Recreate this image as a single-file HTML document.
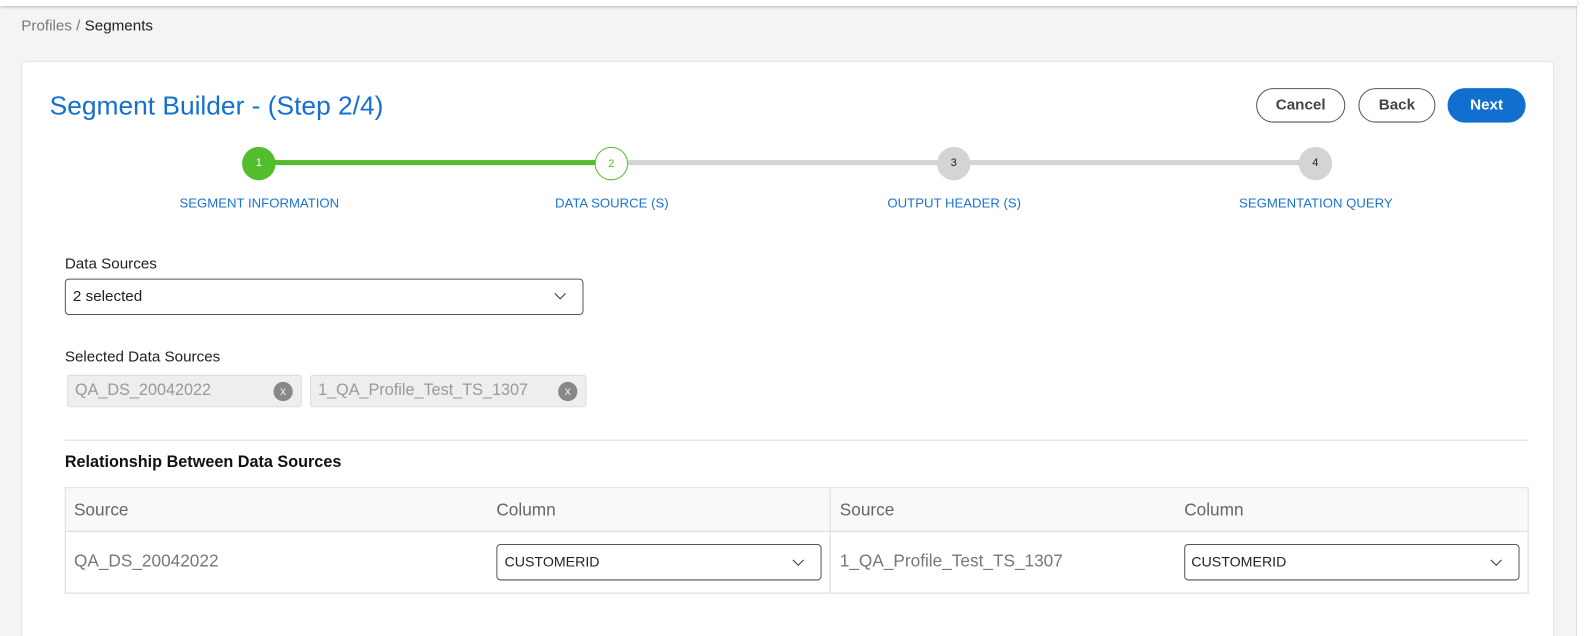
<!DOCTYPE html>
<html style="height:636px;overflow:hidden"><head><meta charset="utf-8"><style>
*{box-sizing:border-box;margin:0;padding:0}
body{width:1589px;height:636px;overflow:hidden;background:#fff;font-family:"Liberation Sans",sans-serif;position:relative}
.bg{position:absolute;left:0;top:0;width:1577px;height:636px;background:#f4f4f4;border-right:1px solid #ddd}
.topbar{position:absolute;left:0;top:0;width:1577px;height:6px;background:#fff;box-shadow:0 1px 3px rgba(0,0,0,.25)}
.a{position:absolute}
.wrap{position:absolute;left:0;top:0;width:1589px;height:636px;transform:scale(1.013);transform-origin:0 0}
.card{position:absolute;left:21px;top:61px;width:1533px;height:580px;background:#fff;border:1px solid #e4e4e4;border-radius:5px}
.btn{position:absolute;top:87px;height:34px;border-radius:17px;border:1px solid #555;background:#fff;font-size:15px;font-weight:bold;color:#444;text-align:center;line-height:32px}
.circ{position:absolute;width:33px;height:33px;border-radius:50%;top:145px;font-size:11px;text-align:center;line-height:33px}
.lbl{position:absolute;top:193px;font-size:13px;color:#1a73d1;transform:translateX(-50%);white-space:nowrap}
.chip{position:absolute;top:370px;height:32px;background:#eee;border:1px solid #ddd;border-radius:3px;color:#999;font-size:16px;line-height:30px;padding-left:7px}
.x{position:absolute;right:8px;top:6px;width:19px;height:19px;border-radius:50%;background:#888;color:#eee;font-size:12px;line-height:19px;text-align:center}
.sel{position:absolute;border:1px solid #555;border-radius:4px;background:#fff;color:#222}
.chev{position:absolute;width:8px;height:8px;border-right:1.5px solid #333;border-bottom:1.5px solid #333;transform:rotate(45deg)}
.th{position:absolute;top:494px;font-size:17px;color:#666}
</style></head><body>
<div class="bg"></div><div class="topbar"></div>
<div class="card"></div>
<div class="wrap">
<div class="a" style="left:21px;top:17px;font-size:15px;color:#777">Profiles / <span style="color:#222">Segments</span></div>
<div class="a" style="left:49px;top:89px;font-size:26px;color:#1470cf">Segment Builder - (Step 2/4)</div>
<div class="btn" style="left:1240px;width:88px">Cancel</div>
<div class="btn" style="left:1341px;width:76px">Back</div>
<div class="btn" style="left:1429px;width:77px;background:#1170cf;border-color:#1170cf;color:#fff">Next</div>
<div class="a" style="left:271px;top:158px;width:333px;height:5px;background:#52bd2d"></div>
<div class="a" style="left:620px;top:158px;width:680px;height:5px;background:#d4d4d4"></div>
<div class="circ" style="left:239px;background:#52bd2d;color:#fff">1</div>
<div class="circ" style="left:587px;background:#fff;border:1px solid #52bd2d;color:#52bd2d">2</div>
<div class="circ" style="left:925px;background:#d4d4d4;color:#222">3</div>
<div class="circ" style="left:1282px;background:#d4d4d4;color:#222">4</div>
<div class="lbl" style="left:256px">SEGMENT INFORMATION</div>
<div class="lbl" style="left:604px">DATA SOURCE (S)</div>
<div class="lbl" style="left:942px">OUTPUT HEADER (S)</div>
<div class="lbl" style="left:1299px">SEGMENTATION QUERY</div>
<div class="a" style="left:64px;top:252px;font-size:15px;color:#222">Data Sources</div>
<div class="sel" style="left:64px;top:275px;width:512px;height:36px;font-size:15px;line-height:34px;padding-left:7px">2 selected<div class="chev" style="left:484px;top:10px"></div></div>
<div class="a" style="left:64px;top:344px;font-size:15px;color:#222">Selected Data Sources</div>
<div class="chip" style="left:66px;width:232px">QA_DS_20042022<div class="x">x</div></div>
<div class="chip" style="left:306px;width:273px">1_QA_Profile_Test_TS_1307<div class="x">x</div></div>
<div class="a" style="left:64px;top:434px;width:1445px;height:1px;background:#ddd"></div>
<div class="a" style="left:64px;top:448px;font-size:16px;font-weight:bold;color:#111">Relationship Between Data Sources</div>
<div class="a" style="left:64px;top:481px;width:1445px;height:105px;border:1px solid #d8d8d8"></div>
<div class="a" style="left:65px;top:482px;width:1443px;height:43px;background:#faf9f8;border-bottom:1px solid #d8d8d8"></div>
<div class="a" style="left:819px;top:482px;width:1px;height:103px;background:#d8d8d8"></div>
<div class="th" style="left:73px">Source</div><div class="th" style="left:490px">Column</div>
<div class="th" style="left:829px">Source</div><div class="th" style="left:1169px">Column</div>
<div class="a" style="left:73px;top:544px;font-size:17px;color:#777">QA_DS_20042022</div>
<div class="a" style="left:829px;top:544px;font-size:17px;color:#777">1_QA_Profile_Test_TS_1307</div>
<div class="sel" style="left:490px;top:537px;width:321px;height:36px;font-size:14px;line-height:32px;padding-left:7px">CUSTOMERID<div class="chev" style="left:293px;top:11px"></div></div>
<div class="sel" style="left:1169px;top:537px;width:331px;height:36px;font-size:14px;line-height:32px;padding-left:6px">CUSTOMERID<div class="chev" style="left:303px;top:11px"></div></div>
</div>
</body></html>
